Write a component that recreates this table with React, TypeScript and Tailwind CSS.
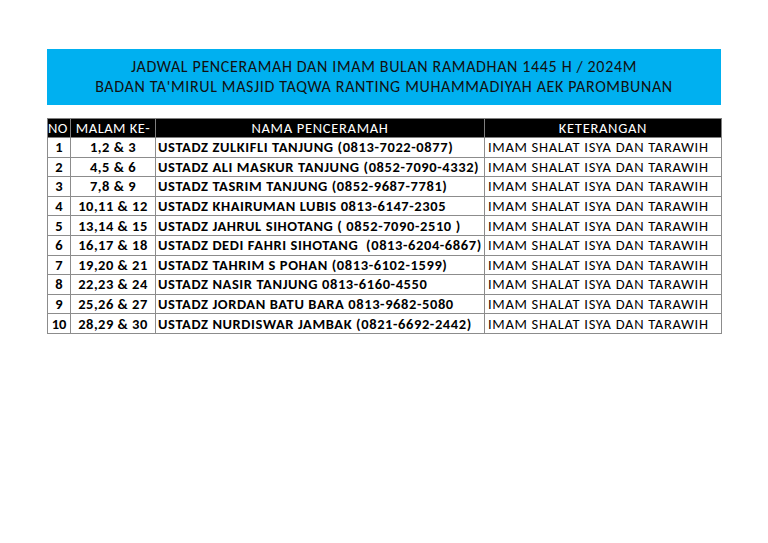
import type { FC } from "react";

interface Row {
  no: number;
  malam: string;
  nama: string;
  ket: string;
}

const rows: Row[] = [
  { no: 1, malam: "1,2 & 3", nama: "USTADZ ZULKIFLI TANJUNG (0813-7022-0877)", ket: "IMAM SHALAT ISYA DAN TARAWIH" },
  { no: 2, malam: "4,5 & 6", nama: "USTADZ ALI MASKUR TANJUNG (0852-7090-4332)", ket: "IMAM SHALAT ISYA DAN TARAWIH" },
  { no: 3, malam: "7,8 & 9", nama: "USTADZ TASRIM TANJUNG (0852-9687-7781)", ket: "IMAM SHALAT ISYA DAN TARAWIH" },
  { no: 4, malam: "10,11 & 12", nama: "USTADZ KHAIRUMAN LUBIS 0813-6147-2305", ket: "IMAM SHALAT ISYA DAN TARAWIH" },
  { no: 5, malam: "13,14 & 15", nama: "USTADZ JAHRUL SIHOTANG ( 0852-7090-2510 )", ket: "IMAM SHALAT ISYA DAN TARAWIH" },
  { no: 6, malam: "16,17 & 18", nama: "USTADZ DEDI FAHRI SIHOTANG  (0813-6204-6867)", ket: "IMAM SHALAT ISYA DAN TARAWIH" },
  { no: 7, malam: "19,20 & 21", nama: "USTADZ TAHRIM S POHAN (0813-6102-1599)", ket: "IMAM SHALAT ISYA DAN TARAWIH" },
  { no: 8, malam: "22,23 & 24", nama: "USTADZ NASIR TANJUNG 0813-6160-4550", ket: "IMAM SHALAT ISYA DAN TARAWIH" },
  { no: 9, malam: "25,26 & 27", nama: "USTADZ JORDAN BATU BARA 0813-9682-5080", ket: "IMAM SHALAT ISYA DAN TARAWIH" },
  { no: 10, malam: "28,29 & 30", nama: "USTADZ NURDISWAR JAMBAK (0821-6692-2442)", ket: "IMAM SHALAT ISYA DAN TARAWIH" },
];

const App: FC = () => {
  return (
    <div
      className="min-h-[543px] w-full bg-white pt-[49px] pl-[47px]"
      style={{ fontFamily: "Carlito, Calibri, Lato, 'Noto Sans', sans-serif" }}
    >
      <header className="flex h-[56px] w-[674px] flex-col items-center justify-center bg-[#00b0f0] text-[16px] leading-[20px] tracking-[0.65px] text-[#111111]">
        <p>JADWAL PENCERAMAH DAN IMAM BULAN RAMADHAN 1445 H / 2024M</p>
        <p>BADAN TA&apos;MIRUL MASJID TAQWA RANTING MUHAMMADIYAH AEK PAROMBUNAN</p>
      </header>

      <table className="mt-[13px] w-[674px] table-fixed border-collapse text-[14.5px] leading-[18px] text-black">
        <colgroup>
          <col className="w-[23px]" />
          <col className="w-[85px]" />
          <col className="w-[329px]" />
          <col className="w-[237px]" />
        </colgroup>
        <thead>
          <tr className="h-[19px] bg-black text-white">
            <th className="overflow-visible whitespace-nowrap border border-[#7f7f7f] px-0 text-left font-normal tracking-[0.3px]">NO</th>
            <th className="whitespace-nowrap border border-[#7f7f7f] px-0 text-center font-normal tracking-[0.5px]">MALAM KE-</th>
            <th className="border border-[#7f7f7f] px-0 text-center font-normal tracking-[0.7px]">NAMA PENCERAMAH</th>
            <th className="border border-[#7f7f7f] px-0 text-center font-normal tracking-[0.7px]">KETERANGAN</th>
          </tr>
        </thead>
        <tbody>
          {rows.map((row) => (
            <tr key={row.no} className="h-[19.6px]">
              <td className="border border-[#8c8c8c] text-center font-bold">{row.no}</td>
              <td className="whitespace-nowrap border border-[#8c8c8c] text-center font-bold tracking-[0.5px]">{row.malam}</td>
              <td className="whitespace-pre border border-[#8c8c8c] pl-[2px] font-bold tracking-[0.6px]">{row.nama}</td>
              <td className="whitespace-nowrap border border-[#8c8c8c] pl-[3px] tracking-[0.7px]">{row.ket}</td>
            </tr>
          ))}
        </tbody>
      </table>
    </div>
  );
};

export default App;
